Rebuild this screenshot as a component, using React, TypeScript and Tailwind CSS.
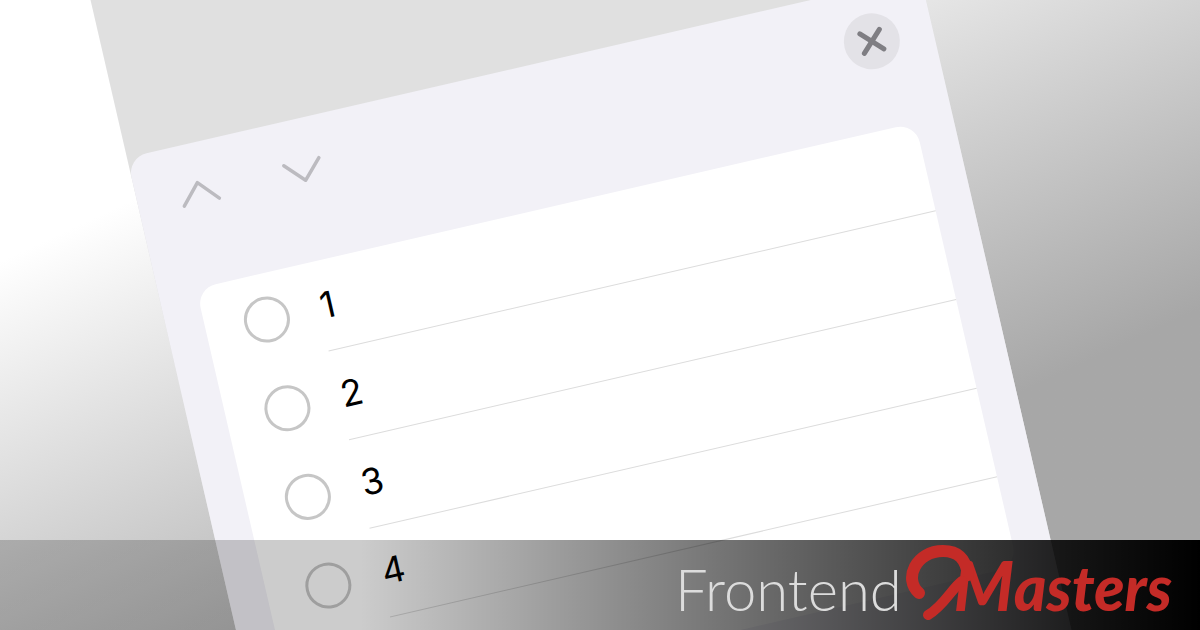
import { X } from "lucide-react";

const items = ["1", "2", "3", "4", "5"];

function Chevron({ direction }: { direction: "up" | "down" }) {
  return (
    <svg
      className="h-14 w-11"
      viewBox="0 0 44 56"
      fill="none"
      stroke="currentColor"
      strokeWidth="3.5"
      strokeLinecap="round"
      strokeLinejoin="round"
      aria-hidden="true"
    >
      <path d={direction === "up" ? "M4 34L22 14L40 34" : "M4 17L22 36L40 17"} />
    </svg>
  );
}

function Wordmark() {
  return (
    <div className="flex items-baseline leading-none">
      <span className="font-[Lato,sans-serif] text-[58px] font-light text-[#dcdcdc]">Frontend</span>
      <span className="relative ml-[52px] font-[Lato,sans-serif] font-black italic text-[#c42b27]">
        <svg
          className="absolute -left-12 -top-2 h-20 w-[72px]"
          viewBox="0 0 72 80"
          fill="none"
          stroke="currentColor"
          strokeLinecap="round"
          aria-hidden="true"
        >
          <path d="M13 50C-3 36 10 8 37 8C53 8 60 17 62 32" strokeWidth="12" />
          <path d="M56 38C47 44 37 64 22 72" strokeWidth="10" />
        </svg>
        <span className="text-[68px]">M</span>
        <span className="text-[62px]">asters</span>
      </span>
    </div>
  );
}

export default function App() {
  return (
    <div className="relative flex h-screen items-start overflow-hidden bg-linear-155 from-white from-22% to-[#a7a7a7] to-73% font-[Inter,sans-serif]">
      <div className="-mt-[37px] ml-[82px] w-[calc(100%-386px)] shrink-0 origin-top-left -rotate-13 bg-[#e0e0e0] pt-[200px]">
        <main className="min-h-screen rounded-t-[20px] bg-[#f2f1f7] px-[38px] pb-24">
          <header className="flex h-[143px] items-start justify-between pt-[26px]">
            <div className="flex gap-[62px] pl-[3px]">
              <button type="button" aria-label="Previous" className="text-[#bcbbc0]">
                <Chevron direction="up" />
              </button>
              <button type="button" aria-label="Next" className="text-[#bcbbc0]">
                <Chevron direction="down" />
              </button>
            </div>
            <button
              type="button"
              aria-label="Close"
              className="-mr-1 flex size-14 items-center justify-center rounded-full bg-[#e3e2e7] text-[#7f7e83]"
            >
              <X className="size-10" strokeWidth={3} />
            </button>
          </header>
          <ul className="rounded-[20px] bg-white">
            {items.map((item) => (
              <li key={item} className="group flex h-[91px] items-center pl-[39px]">
                <input
                  type="radio"
                  name="item"
                  id={`item-${item}`}
                  className="size-[46px] shrink-0 appearance-none rounded-full border-3 border-[#c6c6c6]"
                />
                <label
                  htmlFor={`item-${item}`}
                  className="ml-[30px] flex h-full grow items-center border-b border-[#dcdcdc] pl-0.5 text-4xl text-black group-last:border-b-0"
                >
                  {item}
                </label>
              </li>
            ))}
          </ul>
        </main>
      </div>
      <footer className="absolute inset-x-0 bottom-0 flex h-[90px] items-center justify-end bg-linear-to-r from-black/20 from-30% to-black pr-7">
        <Wordmark />
      </footer>
    </div>
  );
}
